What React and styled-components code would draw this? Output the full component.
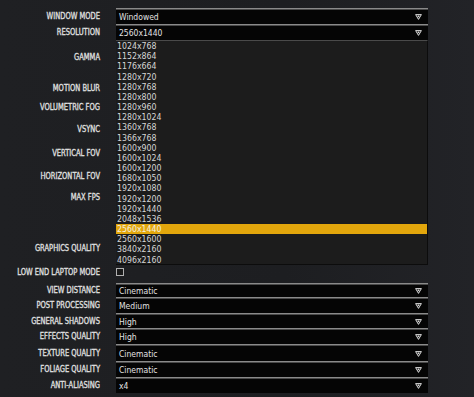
import React from "react";
import styled, { createGlobalStyle } from "styled-components";

const Global = createGlobalStyle`
  html, body { margin: 0; padding: 0; background: #1e1f22; }
  body { width: 474px; height: 397px; overflow: hidden; font-family: "DejaVu Sans Condensed", "DejaVu Sans", sans-serif; }
`;

const Page = styled.div`
  width: 474px;
  height: 397px;
  background: linear-gradient(90deg, #1f2023 0%, #1d1e21 60%, #222327 100%);
  padding-top: 8px;
  box-sizing: border-box;
`;

const Form = styled.div`
  display: flex;
  flex-direction: column;
  width: 428px;
`;

const Row = styled.div`
  display: grid;
  grid-template-columns: 100px 312px;
  column-gap: 16px;
  align-items: center;
  height: ${(p) => p.$h}px;
  position: relative;
`;

const Label = styled.div`
  text-align: right;
  color: #e0e0e0;
  font-weight: normal;
  font-size: 9px;
  line-height: 10px;
  white-space: nowrap;
  text-transform: uppercase;
  -webkit-text-stroke: 0.3px #e0e0e0;
  transform: scaleX(0.83);
  transform-origin: right center;
`;

const Select = styled.div`
  height: 100%;
  box-sizing: border-box;
  background: #050505;
  border-top: 1px solid #8a8a8a;
  box-shadow: inset 0 1px 0 #4a4a4a;
  display: flex;
  align-items: center;
  justify-content: space-between;
  padding: 1px 6px 0 3px;
  color: #e2e2e2;
  font-size: 8.5px;
`;

const Arrow = () => (
  <svg width="7" height="6" viewBox="0 0 7 6">
    <polygon points="0.6,0.6 6.4,0.6 3.5,5.4" fill="#2a2a2a" stroke="#d8d8d8" strokeWidth="1" />
    <circle cx="3.5" cy="2.2" r="0.8" fill="#e8e8e8" />
  </svg>
);

const Dropdown = styled.div`
  position: absolute;
  left: 116px;
  top: 100%;
  width: 312px;
  height: 225px;
  box-sizing: border-box;
  background: #1c1c1c;
  border-top: 1px solid #4a4a4a;
  border-right: 1px solid #0c0c0c;
  border-bottom: 1px solid #0c0c0c;
  z-index: 5;
  display: flex;
  flex-direction: column;
`;

const Item = styled.div`
  height: 10.18px;
  line-height: 10.18px;
  padding-left: 1px;
  font-size: 8.7px;
  color: ${(p) => (p.$active ? "#f4f0e0" : "#d6d6d6")};
  background: ${(p) => (p.$active ? "#e2a60c" : "transparent")};
  white-space: nowrap;
`;

const Checkbox = styled.div`
  width: 8px;
  height: 8px;
  border: 1px solid #b0b0b0;
  background: #1a1a1a;
  box-sizing: border-box;
`;

const resolutions = [
  "1024x768", "1152x864", "1176x664", "1280x720", "1280x768", "1280x800",
  "1280x960", "1280x1024", "1360x768", "1366x768", "1600x900", "1600x1024",
  "1600x1200", "1680x1050", "1920x1080", "1920x1200", "1920x1440", "2048x1536",
  "2560x1440", "2560x1600", "3840x2160", "4096x2160",
];

const SelectField = ({ value }) => (
  <Select>
    <span>{value}</span>
    <Arrow />
  </Select>
);

const rows = [
  { label: "Gamma", h: 34 },
  { label: "Motion Blur", h: 28 },
  { label: "Volumetric Fog", h: 10 },
  { label: "VSync", h: 34 },
  { label: "Vertical FOV", h: 14 },
  { label: "Horizontal FOV", h: 32 },
  { label: "Max FPS", h: 8 },
  { label: "", h: 36 },
  { label: "Graphics Quality", h: 24 },
];

const bottom = [
  { label: "View Distance", value: "Cinematic", h: 14 },
  { label: "Post Processing", value: "Medium", h: 16 },
  { label: "General Shadows", value: "High", h: 15 },
  { label: "Effects Quality", value: "High", h: 16 },
  { label: "Texture Quality", value: "Cinematic", h: 17 },
  { label: "Foliage Quality", value: "Cinematic", h: 16 },
  { label: "Anti-Aliasing", value: "x4", h: 16 },
];

export default function App() {
  return (
    <Page>
      <Global />
      <Form>
        <Row $h={16}>
          <Label>Window Mode</Label>
          <SelectField value="Windowed" />
        </Row>
        <Row $h={16}>
          <Label>Resolution</Label>
          <SelectField value="2560x1440" />
          <Dropdown>
            {resolutions.map((r) => (
              <Item key={r} $active={r === "2560x1440"}>{r}</Item>
            ))}
          </Dropdown>
        </Row>
        {rows.map((r, i) => (
          <Row key={i} $h={r.h}>
            <Label>{r.label}</Label>
            <div />
          </Row>
        ))}
        <Row $h={23}>
          <Label>Low End Laptop Mode</Label>
          <Checkbox />
        </Row>
        {bottom.map((r) => (
          <Row key={r.label} $h={r.h}>
            <Label>{r.label}</Label>
            <SelectField value={r.value} />
          </Row>
        ))}
      </Form>
    </Page>
  );
}
